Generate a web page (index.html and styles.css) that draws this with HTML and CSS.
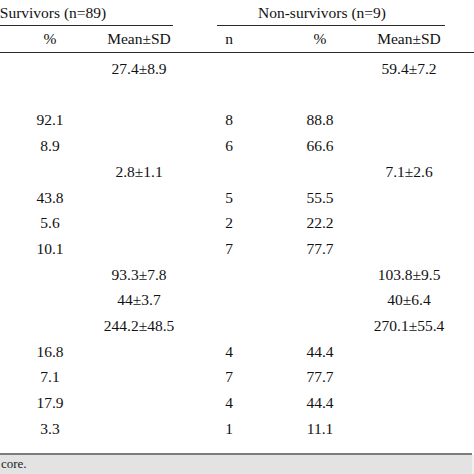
FILE: index.html
```html
<!DOCTYPE html>
<html lang="en">
<head>
<meta charset="utf-8">
<title>Survivors vs non-survivors</title>
<link rel="stylesheet" href="styles.css">
</head>
<body>
<div class="sheet">
  <div class="table-wrap">
    <table class="stats">
      <colgroup>
        <col class="c0"><col class="c1"><col class="c2"><col class="c3"><col class="c4"><col class="c5"><col class="c6">
      </colgroup>
      <thead>
        <tr class="group-row">
          <th colspan="3"><div class="group group-left">Survivors (n=89)</div></th>
          <th colspan="3"><div class="group group-right">Non-survivors (n=9)</div></th>
          <th></th>
        </tr>
        <tr class="sub-row">
          <th></th><th>%</th><th>Mean±SD</th><th>n</th><th>%</th><th>Mean±SD</th><th></th>
        </tr>
      </thead>
      <tbody>
        <tr class="first"><td></td><td></td><td>27.4±8.9</td><td></td><td></td><td>59.4±7.2</td><td></td></tr>
        <tr><td></td><td></td><td></td><td></td><td></td><td></td><td></td></tr>
        <tr><td></td><td>92.1</td><td></td><td>8</td><td>88.8</td><td></td><td></td></tr>
        <tr><td></td><td>8.9</td><td></td><td>6</td><td>66.6</td><td></td><td></td></tr>
        <tr><td></td><td></td><td>2.8±1.1</td><td></td><td></td><td>7.1±2.6</td><td></td></tr>
        <tr><td></td><td>43.8</td><td></td><td>5</td><td>55.5</td><td></td><td></td></tr>
        <tr><td></td><td>5.6</td><td></td><td>2</td><td>22.2</td><td></td><td></td></tr>
        <tr><td></td><td>10.1</td><td></td><td>7</td><td>77.7</td><td></td><td></td></tr>
        <tr><td></td><td></td><td>93.3±7.8</td><td></td><td></td><td>103.8±9.5</td><td></td></tr>
        <tr><td></td><td></td><td>44±3.7</td><td></td><td></td><td>40±6.4</td><td></td></tr>
        <tr><td></td><td></td><td>244.2±48.5</td><td></td><td></td><td>270.1±55.4</td><td></td></tr>
        <tr><td></td><td>16.8</td><td></td><td>4</td><td>44.4</td><td></td><td></td></tr>
        <tr><td></td><td>7.1</td><td></td><td>7</td><td>77.7</td><td></td><td></td></tr>
        <tr><td></td><td>17.9</td><td></td><td>4</td><td>44.4</td><td></td><td></td></tr>
        <tr class="last"><td></td><td>3.3</td><td></td><td>1</td><td>11.1</td><td></td><td></td></tr>
      </tbody>
    </table>
  </div>
  <div class="footer"><span class="note">core.</span></div>
</div>
</body>
</html>
```

FILE: styles.css
```css
html, body {
  margin: 0;
  padding: 0;
  background: #ffffff;
  overflow: hidden;
  font-family: "Liberation Serif", serif;
}

.sheet {
  width: 474px;
  height: 474px;
  overflow: hidden;
  color: #111111;
}

.table-wrap {
  margin-left: -88px;
  width: 560px;
  border-bottom: 2px solid #7c7c7c;
}

.stats {
  border-collapse: separate;
  border-spacing: 0;
  table-layout: fixed;
  width: 562px;
  font-family: "Liberation Serif", serif;
  font-size: 15.5px;
}

.c0 { width: 91px; }
.c1 { width: 94px; }
.c2 { width: 84px; }
.c3 { width: 96px; }
.c4 { width: 86px; }
.c5 { width: 92px; }
.c6 { width: 19px; }

.stats th,
.stats td {
  padding: 0;
  text-align: center;
  font-weight: normal;
  white-space: nowrap;
}

.group-row th {
  height: 26px;
  vertical-align: top;
}

.group {
  line-height: 25px;
  border-bottom: 1px solid #2a2a2a;
}

.group-left {
  margin-right: 8px;
  padding-left: 21px;
}

.group-right {
  margin-left: 36px;
  margin-right: 10px;
  padding-right: 18px;
}

.sub-row th {
  height: 26px;
  line-height: 26px;
  border-bottom: 1px solid #2a2a2a;
}

.stats td {
  height: 25.7px;
  line-height: 25.7px;
}

.stats tr.first td {
  padding-top: 3px;
}

.stats tr.last td {
  padding-bottom: 11px;
}

.footer {
  width: 472px;
  height: 20px;
  background: #e3e3e3;
  border-right: 2px solid #f0f0f0;
  font-family: "Liberation Serif", serif;
  font-size: 13px;
  line-height: 18px;
  color: #222;
}

.note {
  display: inline-block;
  margin-left: 1px;
}
```
